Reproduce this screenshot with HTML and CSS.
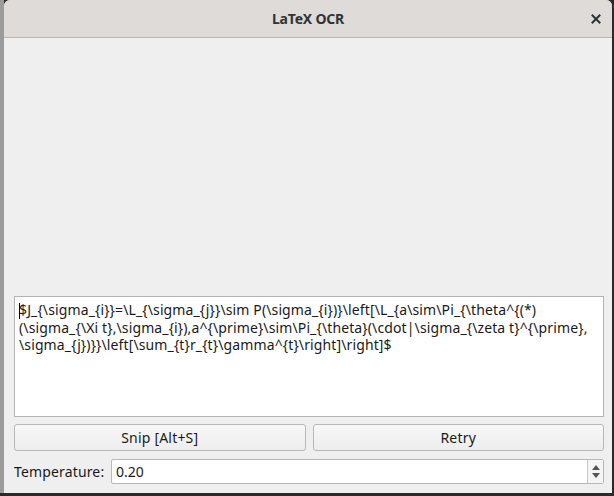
FILE: index.html
```html
<!DOCTYPE html>
<html>
<head>
<meta charset="utf-8">
<link rel="stylesheet" href="styles.css">
</head>
<body>
<div class="desk">
  <div class="window">
    <div class="titlebar">
      <span class="title">LaTeX OCR</span>
      <svg class="close" width="10" height="10" viewBox="0 0 10 10"><path d="M1.5 1.5 L8.5 8.5 M8.5 1.5 L1.5 8.5" stroke="#2e3436" stroke-width="2" stroke-linecap="square"/></svg>
    </div>
    <div class="content">
      <div class="preview"></div>
      <div class="editor"><span class="caret"></span>$J_{\sigma_{i}}=\L_{\sigma_{j}}\sim P(\sigma_{i})}\left[\L_{a\sim\Pi_{\theta^{(*)<br>(\sigma_{\Xi t},\sigma_{i}),a^{\prime}\sim\Pi_{\theta}(\cdot|\sigma_{\zeta t}^{\prime},<br>\sigma_{j})}}\left[\sum_{t}r_{t}\gamma^{t}\right]\right]$</div>
      <div class="buttons">
        <button class="btn">Snip [Alt+S]</button>
        <button class="btn">Retry</button>
      </div>
      <div class="temp">
        <span class="label">Temperature:</span>
        <div class="spin">
          <span class="val">0.20</span>
          <div class="arrows">
            <svg width="8" height="5" viewBox="0 0 8 5"><path d="M0 5 L4 0 L8 5Z" fill="#555"/></svg>
            <svg width="8" height="5" viewBox="0 0 8 5"><path d="M0 0 L8 0 L4 5Z" fill="#555"/></svg>
          </div>
        </div>
      </div>
    </div>
  </div>
</div>
</body>
</html>
```

FILE: styles.css
```css
html, body {
  margin: 0;
  padding: 0;
  width: 614px;
  height: 496px;
  overflow: hidden;
  background: #2a2a2a;
}
.desk {
  display: flex;
  height: 493px;
  background: linear-gradient(to right, #9b9b9b 0, #9b9b9b 4px, #2a2a2a 4px);
}
.window {
  margin-left: 4px;
  width: 608px;
  height: 493px;
  background: #efefef;
  display: flex;
  flex-direction: column;
  border-top-left-radius: 6px;
  border-top-right-radius: 6px;
  overflow: hidden;
}
.titlebar {
  height: 37px;
  flex: none;
  background: #dedbd8;
  border-bottom: 1px solid #bab5ae;
  display: flex;
  align-items: center;
  justify-content: center;
  position: relative;
  font-family: "Noto Sans", sans-serif;
}
.title {
  font-size: 14px;
  font-weight: 700;
  color: #2e3436;
  letter-spacing: -0.2px;
}
.close {
  position: absolute;
  right: 11px;
  top: 14px;
}
.content {
  flex: 1;
  display: flex;
  flex-direction: column;
  padding: 0 8px 0 10px;
  font-family: "Noto Sans", sans-serif;
  font-size: 14px;
  color: #1a1a1a;
}
.preview {
  height: 258px;
  flex: none;
}
.editor {
  height: 114px;
  flex: none;
  background: #fff;
  border: 1px solid #b4b4b4;
  padding: 4px 4px 1px 4px;
  line-height: 17.5px;
  white-space: nowrap;
  overflow: hidden;
  position: relative;
  letter-spacing: 0.12px;
}
.caret {
  position: absolute;
  left: 4px;
  top: 6px;
  width: 1px;
  height: 16px;
  background: #000;
}
.buttons {
  display: flex;
  gap: 7px;
  margin-top: 7px;
}
.btn {
  flex: 1;
  height: 27px;
  border: 1px solid #b8b8b8;
  border-radius: 3px;
  background: linear-gradient(#f8f8f8, #ededed);
  font-family: "Noto Sans", sans-serif;
  font-size: 14px;
  color: #1a1a1a;
  padding: 0;
  letter-spacing: 0.2px;
}
.temp {
  display: flex;
  align-items: center;
  margin-top: 8px;
  gap: 6px;
}
.label {
  width: 91px;
  letter-spacing: 0.15px;
}
.spin {
  flex: 1;
  height: 23px;
  background: #fff;
  border: 1px solid #b8b8b8;
  border-radius: 2px;
  display: flex;
  align-items: center;
}
.val {
  flex: 1;
  padding-left: 4px;
}
.arrows {
  width: 15px;
  height: 100%;
  border-left: 1px solid #c8c8c8;
  display: flex;
  flex-direction: column;
  align-items: center;
  justify-content: center;
  gap: 3px;
  background: #f5f5f5;
}
.arrows svg { display: block; }
```
